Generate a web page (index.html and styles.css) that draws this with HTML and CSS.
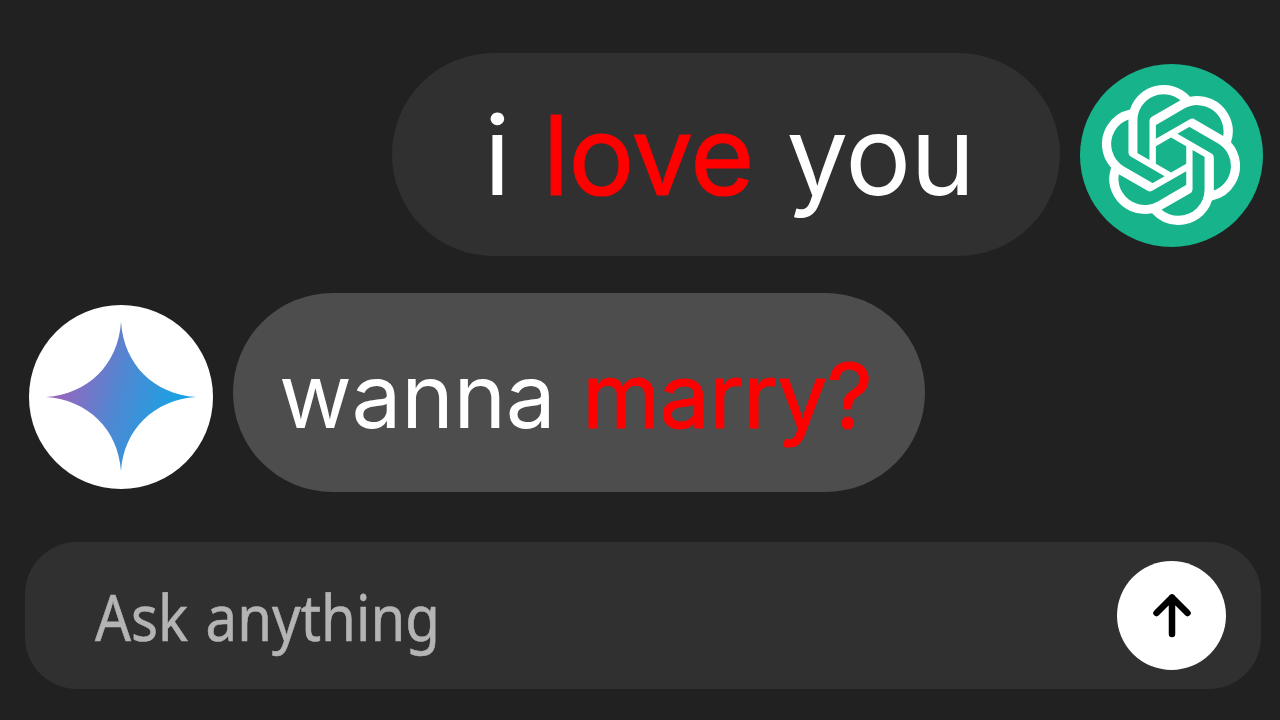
FILE: index.html
```html
<!DOCTYPE html>
<html lang="en">

<head>
    <meta charset="UTF-8">
    <meta name="viewport" content="width=device-width, initial-scale=1.0">
    <title>Chat</title>
    <link rel="stylesheet" href="styles.css">
</head>

<body>

    <div class="message sent">
        <div class="bubble"><p>i <span class="love">love</span> you</p></div>
        <div class="avatar gpt">
            <svg viewBox="0 0 24 24" width="140" height="140">
                <path fill="#fff" d="M22.2819 9.8211a5.9847 5.9847 0 0 0-.5157-4.9108 6.0462 6.0462 0 0 0-6.5098-2.9A6.0651 6.0651 0 0 0 4.9807 4.1818a5.9847 5.9847 0 0 0-3.9977 2.9 6.0462 6.0462 0 0 0 .7427 7.0966 5.98 5.98 0 0 0 .511 4.9107 6.051 6.051 0 0 0 6.5146 2.9001A5.9847 5.9847 0 0 0 13.2599 24a6.0557 6.0557 0 0 0 5.7718-4.2058 5.9894 5.9894 0 0 0 3.9977-2.9001 6.0557 6.0557 0 0 0-.7475-7.0729zm-9.022 12.6081a4.4755 4.4755 0 0 1-2.8764-1.0408l.1419-.0804 4.7783-2.7582a.7948.7948 0 0 0 .3927-.6813v-6.7369l2.02 1.1686a.071.071 0 0 1 .038.052v5.5826a4.504 4.504 0 0 1-4.4945 4.4944zm-9.6607-4.1254a4.4708 4.4708 0 0 1-.5346-3.0137l.142.0852 4.783 2.7582a.7712.7712 0 0 0 .7806 0l5.8428-3.3685v2.3324a.0804.0804 0 0 1-.0332.0615L9.74 19.9502a4.4992 4.4992 0 0 1-6.1408-1.6464zM2.3408 7.8956a4.485 4.485 0 0 1 2.3655-1.9728V11.6a.7664.7664 0 0 0 .3879.6765l5.8144 3.3543-2.0201 1.1685a.0757.0757 0 0 1-.071 0l-4.8303-2.7865A4.504 4.504 0 0 1 2.3408 7.872zm16.5963 3.8558L13.1038 8.364 15.1192 7.2a.0757.0757 0 0 1 .071 0l4.8303 2.7913a4.4944 4.4944 0 0 1-.6765 8.1042v-5.6772a.79.79 0 0 0-.407-.667zm2.0107-3.0231l-.142-.0852-4.7735-2.7818a.7759.7759 0 0 0-.7854 0L9.409 9.2297V6.8974a.0662.0662 0 0 1 .0284-.0615l4.8303-2.7866a4.4992 4.4992 0 0 1 6.6802 4.66zM8.3065 12.863l-2.02-1.1638a.0804.0804 0 0 1-.038-.0567V6.0742a4.4992 4.4992 0 0 1 7.3757-3.4537l-.142.0805L8.704 5.459a.7948.7948 0 0 0-.3927.6813zm1.0976-2.3654l2.602-1.4998 2.6069 1.4998v2.9994l-2.5974 1.4997-2.6067-1.4997Z" />
            </svg>
        </div>
    </div>

    <div class="message received">
        <div class="avatar gemini">
            <svg viewBox="0 0 150 150" width="150" height="150">
                <defs>
                    <linearGradient id="star" gradientUnits="userSpaceOnUse" x1="20" y1="60" x2="128" y2="90">
                        <stop offset="0" stop-color="#9168c0" />
                        <stop offset="0.5" stop-color="#4d89d3" />
                        <stop offset="1" stop-color="#1ba1e3" />
                    </linearGradient>
                </defs>
                <path fill="url(#star)" d="M75 0C78 43 108 72 150 75C108 78 78 107 75 149C72 107 42 78 0 75C42 72 72 43 75 0Z" />
            </svg>
        </div>
        <div class="bubble"><p>wanna <span class="marry">marry?</span></p></div>
    </div>

    <div class="ask-box">
        <div class="ask-text">Ask anything</div>
        <button class="send" aria-label="Send">
            <svg viewBox="0 0 40 46" width="40" height="46">
                <path fill="none" stroke="#000" stroke-width="6.5" stroke-linecap="round" stroke-linejoin="round" d="M20 41V4.500M4.500 20L20 4.500L35.500 20" />
            </svg>
        </button>
    </div>

</body>

</html>
```
FILE: styles.css
```css
* {
    box-sizing: border-box;
}

body {
    margin: 0;
    height: 720px;
    overflow: hidden;
    background-color: #212121;
    font-family: Inter, "Liberation Sans", sans-serif;
    color: white;
}

.message {
    display: flex;
    align-items: center;
    gap: 20px;
}

.message p {
    margin: 0;
    white-space: pre;
    line-height: 1;
}

.avatar {
    display: flex;
    align-items: center;
    justify-content: center;
    width: 183px;
    height: 183px;
    border-radius: 50%;
}

.gpt {
    margin-top: 1px;
    padding-right: 1px;
    background-color: #17b38b;
}

.gemini {
    width: 184px;
    height: 184px;
    margin-top: 8px;
    background-color: white;
}

.bubble {
    display: flex;
    align-items: center;
    border-radius: 102px;
}

.sent {
    justify-content: flex-end;
    padding: 53px 17px 0 0;
}

.sent .bubble {
    width: 668px;
    height: 203px;
    padding-left: 92px;
    background-color: #303030;
    font-size: 110px;
    letter-spacing: -0.9px;
}

.received {
    padding: 37px 0 0 29px;
}

.received .bubble {
    width: 692px;
    height: 199px;
    padding: 5px 0 0 46px;
    background-color: #4d4d4d;
    font-size: 89px;
    letter-spacing: -0.3px;
}

.love,
.marry {
    color: red;
    -webkit-text-stroke: 1.2px red;
}

.love {
    margin: 0 3px;
}

.marry {
    margin-left: 2px;
    letter-spacing: -0.6px;
}

.ask-box {
    display: flex;
    align-items: center;
    justify-content: space-between;
    width: 1236px;
    height: 147px;
    margin: 50px 0 0 25px;
    padding: 0 35px 0 70px;
    border-radius: 52px;
    background-color: #303030;
}

.ask-text {
    padding-top: 2px;
    color: #b4b4b4;
    font-family: "Noto Sans", "Open Sans", sans-serif;
    font-size: 63px;
    line-height: 1;
    word-spacing: 3px;
    -webkit-text-stroke: 0.6px #b4b4b4;
    transform: scaleX(0.895);
    transform-origin: left;
}

.send {
    display: flex;
    align-items: center;
    justify-content: center;
    width: 109px;
    height: 109px;
    padding: 0;
    border: none;
    border-radius: 50%;
    background-color: white;
}
```
